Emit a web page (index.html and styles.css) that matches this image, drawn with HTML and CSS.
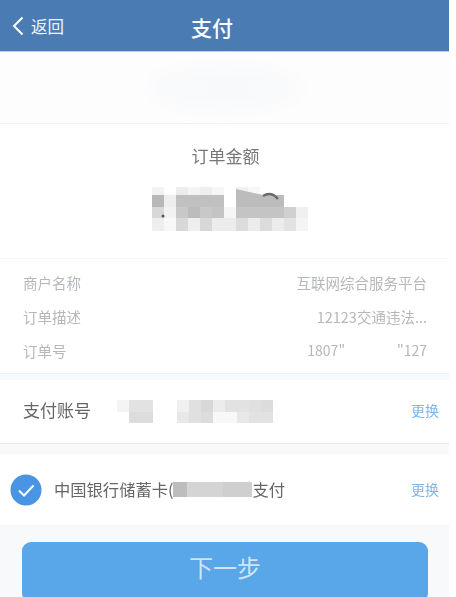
FILE: index.html
```html
<!DOCTYPE html>
<html lang="zh-CN">
<head>
<meta charset="utf-8">
<title>支付</title>
<link rel="stylesheet" href="styles.css">
</head>
<body>
<div class="app">
  <header class="topbar">
    <div class="back">
      <svg class="chevron" width="14" height="22" viewBox="0 0 14 22"><path d="M11.500 2.500 3 11l8.500 8.500" fill="none" stroke="#fff" stroke-width="2"/></svg>
      <span>返回</span>
    </div>
    <h1 class="title">支付</h1>
  </header>
  <section class="banner"><div class="smudge"></div></section>
  <section class="amount">
    <div class="amount-label">订单金额</div>
    <div class="mosaic amount-mosaic">
      <i class="f2"></i><i></i><i class="ec"></i><i class="f4"></i><i class="ee"></i><i class="f6"></i><i></i><i class="f0"></i><i class="f8"></i><i></i><i></i><i></i><i></i>
      <i class="b8"></i><i class="ee"></i><i class="c0"></i><i class="c0"></i><i class="c0"></i><i class="c0"></i><i></i><i class="bc"></i><i class="bc"></i><i class="bc"></i><i class="bc"></i><i></i><i></i>
      <i class="d8"></i><i class="f2"></i><i class="c8"></i><i class="bc"></i><i class="c8"></i><i class="c4"></i><i class="f6"></i><i class="c4"></i><i class="c4"></i><i class="c4"></i><i class="c4"></i><i class="d0"></i><i class="f0"></i>
      <i class="ee"></i><i class="f8"></i><i class="d8"></i><i class="ee"></i><i class="d8"></i><i class="ec"></i><i class="ec"></i><i class="dc"></i><i class="ec"></i><i class="dc"></i><i class="ec"></i><i class="e2"></i><i class="f4"></i>
      <svg class="mosaic-marks" width="156" height="44" viewBox="0 0 156 44">
        <path d="M84 2 111 8H84z" fill="#bcbcbc"/>
        <path d="M111 9q8-5 15 3" fill="none" stroke="#6a6a6a" stroke-width="2.500"/>
        <circle cx="11" cy="29" r="1.500" fill="#555"/>
      </svg>
    </div>
  </section>
  <section class="details">
    <div class="detail"><span>商户名称</span><span>互联网综合服务平台</span></div>
    <div class="detail"><span>订单描述</span><span>12123交通违法...</span></div>
    <div class="detail"><span>订单号</span><span class="order-no"><span>1807"</span><span>"127</span></span></div>
  </section>
  <section class="row account">
    <span class="account-label">支付账号</span>
    <div class="account-value">
      <div class="mosaic short-mosaic">
        <i class="f4"></i><i class="e2"></i><i class="e2"></i>
        <i></i><i class="dc"></i><i class="dc"></i>
      </div>
      <div class="mosaic long-mosaic">
        <i class="f0"></i><i class="e0"></i><i class="d8"></i><i class="ec"></i><i class="e2"></i><i class="e2"></i><i class="e0"></i><i class="dc"></i>
        <i class="e8"></i><i class="e0"></i><i class="dc"></i><i class="f8"></i><i class="f8"></i><i class="e8"></i><i class="e2"></i><i class="e2"></i>
      </div>
    </div>
    <span class="change">更换</span>
  </section>
  <section class="row card">
    <span class="check">
      <svg width="32" height="32" viewBox="0 0 32 32"><circle cx="16" cy="16" r="15.500" fill="#4a94e4"/><path d="M9 16.500l5 5 9.500-10" fill="none" stroke="#fff" stroke-width="2"/></svg>
    </span>
    <span class="card-name">中国银行储蓄卡(</span>
    <span class="card-mask"></span>
    <span class="card-name">支付</span>
    <span class="change">更换</span>
  </section>
  <footer class="actions">
    <button class="next" type="button">下一步</button>
  </footer>
</div>
</body>
</html>
```
FILE: styles.css
```css
* { box-sizing: border-box; }
html, body { margin: 0; padding: 0; background: #fff; }
body {
  font-family: "Noto Sans CJK SC", "Liberation Sans", sans-serif;
  overflow: hidden;
}
.app {
  width: 449px;
  height: 597px;
  overflow: hidden;
  background: #f8f9fa;
  display: flex;
  flex-direction: column;
}
.topbar {
  height: 52px;
  flex: none;
  background: #4a7cb3;
  border-bottom: 1px solid #b9d0e6;
  color: #fff;
  display: flex;
  align-items: center;
  padding-left: 11px;
}
.back {
  width: 180px;
  display: flex;
  align-items: center;
  gap: 6px;
  font-size: 16.500px;
  color: #eef3f9;
}
.title {
  margin: 0;
  font-size: 21px;
  font-weight: 500;
  line-height: 1;
  padding-top: 4px;
}
.banner {
  height: 72px;
  flex: none;
  background: #fdfdfe;
  border-bottom: 1px solid #f0f3f5;
  display: flex;
  justify-content: center;
  align-items: center;
  overflow: hidden;
}
.smudge {
  width: 150px;
  height: 44px;
  border-radius: 50%;
  background: #f8f9fa;
  filter: blur(8px);
}
.amount {
  height: 134px;
  flex: none;
  background: #fff;
  display: flex;
  flex-direction: column;
  align-items: center;
  padding-top: 21px;
}
.amount-label {
  font-size: 17px;
  line-height: 22px;
  color: #777;
  margin-left: 2px;
  filter: blur(0.4px);
}
.mosaic { display: grid; }
.mosaic i { display: block; }
.amount-mosaic {
  position: relative;
  margin-top: 20px;
  margin-left: 10px;
  grid-template-columns: repeat(13, 12px);
  grid-template-rows: 8px 12px 11px 13px;
}
.mosaic-marks {
  position: absolute;
  top: 0;
  left: 0;
}
.f8 { background: #f8f8f8; }
.f6 { background: #f6f6f6; }
.f4 { background: #f4f4f4; }
.f2 { background: #f2f2f2; }
.f0 { background: #f0f0f0; }
.ee { background: #eeeeee; }
.ec { background: #ececec; }
.e8 { background: #e8e8e8; }
.e2 { background: #e2e2e2; }
.e0 { background: #e0e0e0; }
.dc { background: #dcdcdc; }
.d8 { background: #d8d8d8; }
.d0 { background: #d0d0d0; }
.c8 { background: #c8c8c8; }
.c4 { background: #c4c4c4; }
.c0 { background: #c0c0c0; }
.bc { background: #bcbcbc; }
.b8 { background: #b8b8b8; }
.details {
  height: 116px;
  flex: none;
  background: #fff;
  border-top: 1px solid #f4f6f7;
  border-bottom: 1px solid #eef1f3;
  padding: 6px 22px 0 23px;
  display: flex;
  flex-direction: column;
  filter: blur(0.5px);
}
.detail {
  height: 34px;
  display: flex;
  justify-content: space-between;
  align-items: center;
  font-size: 14.500px;
  color: #b4b8bb;
}
.order-no {
  display: flex;
  gap: 52px;
  font-size: 14px;
}
.row {
  flex: none;
  background: #fff;
  display: flex;
  align-items: center;
}
.account {
  height: 64px;
  margin-top: 6px;
  padding: 0 10px 0 23px;
  border-bottom: 1px solid #e4edf3;
}
.account-label {
  font-size: 17px;
  color: #666;
  margin-top: -4px;
  filter: blur(0.4px);
}
.account-value {
  flex: 1;
  display: flex;
  gap: 24px;
  padding-left: 26px;
}
.short-mosaic {
  grid-template-columns: repeat(3, 12px);
  grid-template-rows: 12px 11px;
}
.long-mosaic {
  grid-template-columns: repeat(8, 12px);
  grid-template-rows: 12px 11px;
}
.change {
  font-size: 14px;
  color: #7fb6e8;
  margin-top: -4px;
  filter: blur(0.5px);
}
.card {
  height: 72px;
  margin-top: 10px;
  padding: 0 10px 0 10px;
  border-bottom: 1px solid #f2f4f5;
}
.check {
  width: 32px;
  height: 32px;
  display: block;
  margin-right: 12px;
}
.check svg { display: block; }
.card-name {
  font-size: 16.300px;
  color: #666;
  margin-top: -2px;
  filter: blur(0.4px);
}
.card-mask {
  width: 79px;
  height: 15px;
  background: linear-gradient(90deg, #bdbdbd 0 14px, #d4d4d4 14px 50px, #cfcfcf 50px);
}
.card .change { margin-left: auto; margin-top: -2px; }
.actions {
  flex: none;
  padding: 16px 21px 0 22px;
}
.next {
  display: block;
  width: 100%;
  height: 60px;
  border: 0;
  border-radius: 9px;
  background: #59a7e9;
  color: #cfe4f6;
  font-family: inherit;
  font-size: 24px;
  padding: 0 0 12px;
}
```
